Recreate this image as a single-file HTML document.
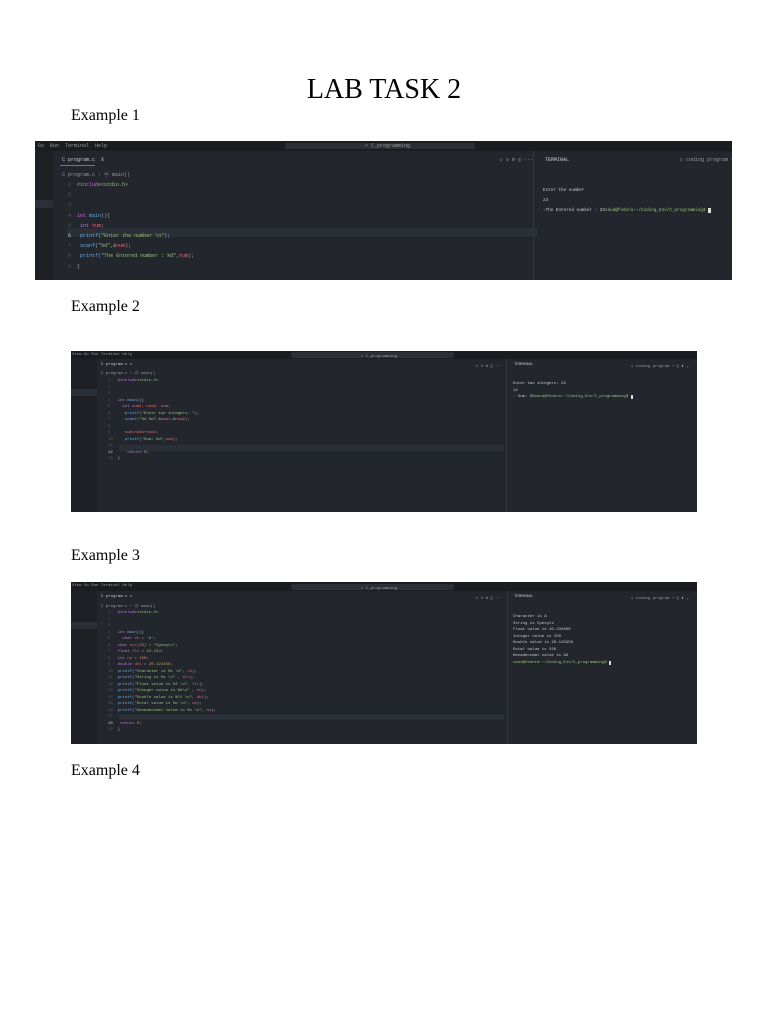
<!DOCTYPE html>
<html><head><meta charset="utf-8"><style>
body{margin:0;background:#fff;width:768px;height:1024px;position:relative;font-family:"Liberation Serif",serif;overflow:hidden}
.t{position:absolute;color:#000}
.ss{position:absolute;background:#23262d;overflow:hidden;font-family:"Liberation Mono",monospace;font-size:5px;color:#aab}
.ss div{position:absolute;white-space:pre}
.top{left:0;top:0;right:0;background:#1a1c21}
.srch{background:#2c2f36;border-radius:2px}
.side{left:0;bottom:0;background:#1e2025}
.hl{background:#2b2f37}
.div{width:1px;background:#33363e}
.k{color:#c678dd}.s{color:#98c379}.f{color:#61afef}.v{color:#e06c75}.n{color:#d19a66}.g{color:#98c379}
.ln{color:#555b66}
</style></head><body>
<div class="t" style="left:0;width:768px;top:74px;text-align:center;font-size:28px">LAB TASK 2</div>
<div class="t" style="left:71px;top:107px;font-size:16px">Example 1</div>
<div class="t" style="left:71px;top:298px;font-size:16px">Example 2</div>
<div class="t" style="left:71px;top:547px;font-size:16px">Example 3</div>
<div class="t" style="left:71px;top:762px;font-size:16px">Example 4</div>

<!-- Screenshot 1 -->
<div class="ss" style="left:35px;top:141px;width:697px;height:139px">
 <div class="top" style="height:10px"></div>
 <div style="left:3px;top:2px;color:#999">Go  Run  Terminal  Help</div>
 <div class="srch" style="left:250px;top:2px;width:190px;height:6px"></div>
 <div style="left:330px;top:2px;color:#999">⌕ C_programming</div>
 <div class="side" style="top:10px;width:18px"></div>
 <div class="hl" style="left:0;top:59px;width:18px;height:8px"></div>
 <div style="left:27px;top:16px;color:#ccd">C program.c  X</div>
 <div style="left:25px;top:24px;width:35px;height:1px;background:#777"></div>
 <div style="left:27px;top:30px;color:#99a">C program.c › ⓜ main()</div>
 <div class="hl" style="left:32px;top:87px;width:470px;height:9px"></div>
 <div class="div" style="left:498px;top:10px;height:129px"></div>
 <div style="left:465px;top:16px;color:#999">▷ ∨ ⚙ ◫ ···</div>
 <div style="left:510px;top:16px;color:#ccd">TERMINAL</div>
 <div style="left:645px;top:16px;color:#999">▯ coding program + ·</div>
 <div style="left:33px;top:39px;line-height:10.2px"><span class="ln">1</span>  <span class="k">#include</span><span class="s">&lt;stdio.h&gt;</span>
<span class="ln">2</span>
<span class="ln">3</span>
<span class="ln">4</span>  <span class="k">int</span> <span class="f">main</span>(){
<span class="ln">5</span>   <span class="k">int</span> <span class="v">num</span>;
<span style="color:#ccc">6</span>   <span class="f">printf</span>(<span class="s">"Enter the number \n"</span>);
<span class="ln">7</span>   <span class="f">scanf</span>(<span class="s">"%d"</span>,&amp;<span class="v">num</span>);
<span class="ln">8</span>   <span class="f">printf</span>(<span class="s">"The Entered number : %d"</span>,<span class="v">num</span>);
<span class="ln">9</span>  }</div>
 <div style="left:508px;top:45px;line-height:10px;color:#ccc;font-size:4.3px">Enter the number
23
◦The Entered number : 23<span class="g">saud@fedora:~/Coding_Env/C_programming$</span> <span style="background:#ddd">&nbsp;</span></div>
</div>

<!-- Screenshot 2 -->
<div class="ss" style="left:71px;top:351px;width:626px;height:161px;font-size:4px">
 <div class="top" style="height:8px"></div>
 <div style="left:1px;top:2px;color:#999">View Go Run Terminal Help</div>
 <div class="srch" style="left:220px;top:1px;width:163px;height:6px"></div>
 <div style="left:290px;top:2px;color:#999">⌕ C_programming</div>
 <div class="side" style="top:8px;width:26px"></div>
 <div class="hl" style="left:0;top:38px;width:26px;height:7px"></div>
 <div style="left:30px;top:12px;color:#ccd">C program.c ×</div>
 <div style="left:30px;top:19px;color:#99a">C program.c › ⓜ main()</div>
 <div class="hl" style="left:48px;top:94px;width:385px;height:6px"></div>
 <div class="div" style="left:435px;top:8px;height:153px"></div>
 <div style="left:405px;top:12px;color:#999">▷ ∨ ⚙ ◫ ···</div>
 <div style="left:443px;top:12px;color:#ccd">TERMINAL</div>
 <div style="left:560px;top:12px;color:#999">▯ coding program + ◫ ▮ ⌄</div>
 <div style="left:37px;top:27px;line-height:6.5px"><span class="ln">1</span>   <span class="k">#include</span><span class="s">&lt;stdio.h&gt;</span>
<span class="ln">2</span>
<span class="ln">3</span>
<span class="ln">4</span>   <span class="k">int</span> <span class="f">main</span>(){
<span class="ln">5</span>     <span class="k">int</span> <span class="v">num1, num2, sum</span>;
<span class="ln">6</span>      <span class="f">printf</span>(<span class="s">"Enter two integers: "</span>);
<span class="ln">7</span>      <span class="f">scanf</span>(<span class="s">"%d %d"</span>,&amp;<span class="v">num1</span>,&amp;<span class="v">num2</span>);
<span class="ln">8</span>
<span class="ln">9</span>      <span class="v">sum=num1+num2</span>;
<span class="ln">10</span>     <span class="f">printf</span>(<span class="s">"Sum: %d"</span>,<span class="v">sum</span>);
<span class="ln">11</span>
<span style="color:#ccc">12</span>      <span class="k">return</span> <span class="n">0</span>;
<span class="ln">13</span>  }</div>
 <div style="left:442px;top:30px;line-height:6.5px;color:#ccc">Enter two integers: 23
12
◦ Sum: 35<span class="g">saud@fedora:~/Coding_Env/C_programming$</span> <span style="background:#ddd">&nbsp;</span></div>
</div>

<!-- Screenshot 3 -->
<div class="ss" style="left:71px;top:582px;width:626px;height:162px;font-size:4px">
 <div class="top" style="height:9px"></div>
 <div style="left:1px;top:2px;color:#999">View Go Run Terminal Help</div>
 <div class="srch" style="left:220px;top:2px;width:163px;height:6px"></div>
 <div style="left:290px;top:3px;color:#999">⌕ C_programming</div>
 <div class="side" style="top:9px;width:26px"></div>
 <div class="hl" style="left:0;top:40px;width:26px;height:7px"></div>
 <div style="left:30px;top:13px;color:#ccd">C program.c ×</div>
 <div style="left:30px;top:21px;color:#99a">C program.c › ⓜ main()</div>
 <div class="hl" style="left:48px;top:132px;width:385px;height:6px"></div>
 <div class="div" style="left:436px;top:9px;height:153px"></div>
 <div style="left:405px;top:13px;color:#999">▷ ∨ ⚙ ◫ ···</div>
 <div style="left:443px;top:13px;color:#ccd">TERMINAL</div>
 <div style="left:560px;top:13px;color:#999">▯ coding program + ◫ ▮ ⌄</div>
 <div style="left:37px;top:28px;line-height:6.5px"><span class="ln">1</span>   <span class="k">#include</span><span class="s">&lt;stdio.h&gt;</span>
<span class="ln">2</span>
<span class="ln">3</span>
<span class="ln">4</span>   <span class="k">int</span> <span class="f">main</span>(){
<span class="ln">5</span>     <span class="k">char</span> <span class="v">ch</span> = <span class="s">'A'</span>;
<span class="ln">6</span>   <span class="k">char</span> <span class="v">str[20]</span> = <span class="s">"Cpesyts"</span>;
<span class="ln">7</span>   <span class="k">float</span> <span class="v">flt</span> = <span class="n">10.234</span>;
<span class="ln">8</span>   <span class="k">int</span> <span class="v">no</span> = <span class="n">150</span>;
<span class="ln">9</span>   <span class="k">double</span> <span class="v">dbl</span> = <span class="n">20.123456</span>;
<span class="ln">10</span>  <span class="f">printf</span>(<span class="s">"Character is %c \n"</span>, <span class="v">ch</span>);
<span class="ln">11</span>  <span class="f">printf</span>(<span class="s">"String is %s \n"</span> , <span class="v">str</span>);
<span class="ln">12</span>  <span class="f">printf</span>(<span class="s">"Float value is %f \n"</span>, <span class="v">flt</span>);
<span class="ln">13</span>  <span class="f">printf</span>(<span class="s">"Integer value is %d\n"</span> , <span class="v">no</span>);
<span class="ln">14</span>  <span class="f">printf</span>(<span class="s">"Double value is %lf \n"</span>, <span class="v">dbl</span>);
<span class="ln">15</span>  <span class="f">printf</span>(<span class="s">"Octal value is %o \n"</span>, <span class="v">no</span>);
<span class="ln">16</span>  <span class="f">printf</span>(<span class="s">"Hexadecimal value is %x \n"</span>, <span class="v">no</span>);
<span class="ln">17</span>
<span style="color:#ccc">18</span>   <span class="k">return</span> <span class="n">0</span>;
<span class="ln">19</span>  }</div>
 <div style="left:442px;top:32px;line-height:6.5px;color:#ccc">Character is A
String is Cpesyts
Float value is 10.234000
Integer value is 150
Double value is 20.123456
Octal value is 226
Hexadecimal value is 96
<span class="g">saud@fedora:~/Coding_Env/C_programming$</span> <span style="background:#ddd">&nbsp;</span></div>
</div>
</body></html>
